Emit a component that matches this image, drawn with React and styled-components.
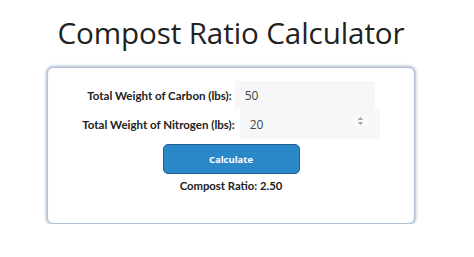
import styled, { createGlobalStyle } from 'styled-components'

const Global = createGlobalStyle`
body{
  margin:0;
  background:#fff;
  font-family: "Open Sans", "Noto Sans", sans-serif;
  color:#222;
}
`

const Page = styled.div`
display:flex;
flex-direction:column;
align-items:center;
padding-top:13px;
padding-right:12px;
`

const Title = styled.h1`
margin:0;
font-size:29.6px;
font-weight:400;
line-height:40px;
color:#222;
letter-spacing:-0.1px;
`

const Card = styled.form`
box-sizing:border-box;
width:368px;
height:157px;
margin-top:14px;
background:#fff;
border-radius:6px;
border:1px solid #b3c3d4;
box-shadow: 0 0 3px 1px #a9bbcf, inset 0 0 1px #c8d4e0;
display:flex;
flex-direction:column;
align-items:center;
padding-top:13px;
`

const Row = styled.div`
display:flex;
align-items:center;
`

const Label = styled.label`
font-family: Lato, "Open Sans", sans-serif;
font-size:11.5px;
font-weight:700;
color:#222;
`

const Input = styled.input`
box-sizing:border-box;
width:140px;
height:${p => p.h || 28}px;
border:none;
background:#f6f7f8;
font-family:inherit;
font-size:12px;
color:#444;
padding:0 12px 0 10px;
margin-left:${p => p.gap || 0}px;
outline:none;
&::-webkit-inner-spin-button{
  opacity:0.7;
  height:11px;
  width:8px;
}
`

const Button = styled.button`
margin-top:5px;
width:137px;
height:30px;
background:#2a88c8;
border:1px solid #1f5f94;
border-radius:5px;
color:#fff;
font-family:inherit;
font-weight:700;
font-size:9.5px;
`

const Result = styled.p`
margin:5px 0 0;
font-family: Lato, "Open Sans", sans-serif;
font-size:11.3px;
font-weight:700;
color:#222;
`

export default function App() {
  return (
    <>
      <Global />
      <Page>
        <Title>Compost Ratio Calculator</Title>
        <Card onSubmit={e => e.preventDefault()}>
          <Row>
            <Label>Total Weight of Carbon (lbs):</Label>
            <Input type="text" defaultValue="50" h={28} gap={3} />
          </Row>
          <Row>
            <Label>Total Weight of Nitrogen (lbs):</Label>
            <Input type="number" defaultValue="20" h={30} gap={5} />
          </Row>
          <Button type="submit">Calculate</Button>
          <Result>Compost Ratio: 2.50</Result>
        </Card>
      </Page>
    </>
  )
}
